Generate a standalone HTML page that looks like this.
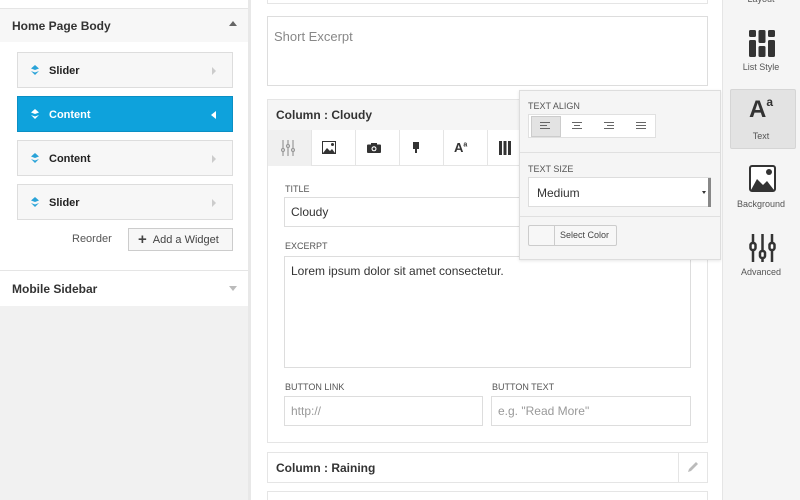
<!DOCTYPE html>
<html><head><style>
*{box-sizing:border-box;margin:0;padding:0}
html,body{width:800px;height:500px;overflow:hidden}
body{position:relative;background:#fff;font-family:"Liberation Sans",sans-serif;color:#333}
.a{position:absolute}
.lbl{font-size:9px;color:#555;text-transform:uppercase}
.inp{border:1px solid #ddd;background:#fff;font-size:12px;color:#333;padding:7px 6px}
.item{left:17px;width:216px;height:36px;border:1px solid #ddd;background:#f7f7f7;font-size:11px;font-weight:bold;padding:12px 0 0 31px;color:#222}
.item .ic{position:absolute;left:12px;top:12px;width:10px;height:10px}
.item .ar{position:absolute;right:16px;top:14px;width:0;height:0;border-left:4px solid #ccc;border-top:4px solid transparent;border-bottom:4px solid transparent}
.tb{top:130px;height:36px;width:44px;border-right:1px solid #e5e5e5}
.ri{left:722px;width:78px;text-align:center;font-size:9px;color:#555}
</style></head><body>
<div class="a" style="left:0;top:0;width:248px;height:500px;background:#f1f1f1"></div>
<div class="a" style="left:0;top:0;width:248px;height:306px;background:#fff"></div>
<div class="a" style="left:0;top:8px;width:248px;height:34px;background:#f7f7f7;border-top:1px solid #e5e5e5;font-size:12px;font-weight:bold;padding:10px 12px">Home Page Body</div>
<div class="a" style="left:229px;top:21px;border-bottom:5px solid #666;border-left:4px solid transparent;border-right:4px solid transparent"></div>
<div class="a item" style="top:52px"><svg class="ic" viewBox="0 0 10 10"><path d="M5 0L9 3.5L5 5L1 3.5Z M1 6L5 7.5L9 6L5 10Z" fill="#2aa3d8"/></svg>Slider<span class="ar"></span></div>
<div class="a item" style="top:96px;background:#0ea2dc;border-color:#0b8fc4;color:#fff"><svg class="ic" viewBox="0 0 10 10"><path d="M5 0L9 3.5L5 5L1 3.5Z M1 6L5 7.5L9 6L5 10Z" fill="#fff"/></svg>Content<span class="ar" style="border-left:none;border-right:5px solid #fff"></span></div>
<div class="a item" style="top:140px"><svg class="ic" viewBox="0 0 10 10"><path d="M5 0L9 3.5L5 5L1 3.5Z M1 6L5 7.5L9 6L5 10Z" fill="#2aa3d8"/></svg>Content<span class="ar"></span></div>
<div class="a item" style="top:184px"><svg class="ic" viewBox="0 0 10 10"><path d="M5 0L9 3.5L5 5L1 3.5Z M1 6L5 7.5L9 6L5 10Z" fill="#2aa3d8"/></svg>Slider<span class="ar"></span></div>
<div class="a" style="left:72px;top:233px;font-size:11px;color:#555">Reorder</div>
<div class="a" style="left:128px;top:228px;width:105px;height:23px;border:1px solid #ccc;background:#f7f7f7;font-size:11px;color:#444;display:flex;align-items:center;padding-left:9px"><b style="font-size:15px;margin-right:6px;line-height:1">+</b>Add a Widget</div>
<div class="a" style="left:0;top:270px;width:248px;height:36px;border-top:1px solid #e5e5e5;font-size:12px;font-weight:bold;padding:11px 12px">Mobile Sidebar</div>
<div class="a" style="left:229px;top:286px;border-top:5px solid #bbb;border-left:4px solid transparent;border-right:4px solid transparent"></div>
<div class="a" style="left:248px;top:0;width:3px;height:500px;background:#e8e8e8"></div>
<div class="a" style="left:267px;top:-2px;width:441px;height:6px;border:1px solid #e5e5e5"></div>
<div class="a inp" style="left:267px;top:16px;width:441px;height:70px;color:#888;font-size:13px;padding:12px 6px">Short Excerpt</div>
<div class="a" style="left:267px;top:99px;width:441px;height:344px;border:1px solid #e5e5e5"></div>
<div class="a" style="left:268px;top:100px;width:439px;height:30px;background:#f5f5f5;font-size:12px;font-weight:bold;padding:8px 8px;color:#333">Column : Cloudy</div>
<div class="a" style="left:268px;top:130px;width:439px;height:36px;border-bottom:1px solid #e5e5e5"></div>
<div class="a tb" style="left:268px;background:#f0f0f0"><svg style="margin:10px 0 0 13px" width="14" height="16" viewBox="0 0 14 16" fill="none" stroke="#999" stroke-width="1.2"><path d="M2 0V16M7 0V16M12 0V16"/><circle cx="2" cy="10" r="1.5" fill="#f0f0f0"/><circle cx="7" cy="6" r="1.5" fill="#f0f0f0"/><circle cx="12" cy="10" r="1.5" fill="#f0f0f0"/></svg></div>
<div class="a tb" style="left:312px"><svg style="margin:11px 0 0 10px" width="14" height="13" viewBox="0 0 14 13"><rect x="0.5" y="0.5" width="13" height="12" fill="#fff" stroke="#333"/><path d="M1 12L5 7L8 10L10 8L13 12Z" fill="#333"/><circle cx="10.5" cy="3.5" r="1.5" fill="#333"/></svg></div>
<div class="a tb" style="left:356px"><svg style="margin:13px 0 0 11px" width="14" height="10" viewBox="0 0 14 10"><rect x="0" y="1.5" width="14" height="8.5" rx="1" fill="#333"/><rect x="4" y="0" width="6" height="2" fill="#333"/><circle cx="7" cy="5.8" r="2.5" fill="#fff"/><circle cx="7" cy="5.8" r="1.4" fill="#333"/></svg></div>
<div class="a tb" style="left:400px"><svg style="margin:12px 0 0 13px" width="6" height="12" viewBox="0 0 6 12"><rect x="0" y="0" width="6" height="7" fill="#333"/><rect x="2" y="7" width="2" height="4" fill="#333"/></svg></div>
<div class="a tb" style="left:444px;font-weight:bold;font-size:13px;padding:10px 0 0 10px;color:#333">A<sup style="font-size:7px">a</sup></div>
<div class="a tb" style="left:488px;border-right:none"><svg style="margin:11px 0 0 11px" width="12" height="14" viewBox="0 0 12 14"><rect x="0" y="0" width="3" height="14" fill="#333"/><rect x="4.5" y="0" width="3" height="14" fill="#333"/><rect x="9" y="0" width="3" height="14" fill="#333"/></svg></div>
<div class="a lbl" style="left:285px;top:184px">Title</div>
<div class="a inp" style="left:284px;top:197px;width:406px;height:30px;font-size:12px">Cloudy</div>
<div class="a lbl" style="left:285px;top:241px">Excerpt</div>
<div class="a inp" style="left:284px;top:256px;width:407px;height:112px;font-size:12px">Lorem ipsum dolor sit amet consectetur.</div>
<div class="a lbl" style="left:285px;top:382px">Button link</div>
<div class="a inp" style="left:284px;top:396px;width:199px;height:30px;color:#999">http://</div>
<div class="a lbl" style="left:492px;top:382px">Button text</div>
<div class="a inp" style="left:491px;top:396px;width:200px;height:30px;color:#999">e.g. "Read More"</div>
<div class="a" style="left:267px;top:452px;width:441px;height:31px;border:1px solid #e5e5e5;font-size:12px;font-weight:bold;padding:8px 8px">Column : Raining</div>
<div class="a" style="left:678px;top:453px;width:1px;height:29px;background:#e5e5e5"></div>
<svg class="a" style="left:687px;top:461px" width="12" height="12" viewBox="0 0 12 12"><path d="M1 11L2 8L9 1L11 3L4 10Z" fill="#bbb"/></svg>
<div class="a" style="left:267px;top:491px;width:441px;height:9px;border:1px solid #e5e5e5;border-bottom:none"></div>
<div class="a" style="left:519px;top:90px;width:202px;height:170px;background:#f5f5f5;border:1px solid #ddd;box-shadow:0 1px 3px rgba(0,0,0,.1)"></div>
<div class="a lbl" style="left:528px;top:101px">Text align</div>
<div class="a" style="left:528px;top:114px;width:128px;height:24px;border:1px solid #e0e0e0;background:#fff"></div>
<div class="a" style="left:531px;top:116px;width:30px;height:21px;background:#e3e3e3;border:1px solid #ccc"></div>
<svg class="a" style="left:540px;top:122px" width="110" height="8" viewBox="0 0 110 8" stroke="#666" stroke-width="1"><path d="M0 .5H10M0 3.5H7M0 6.5H10M32 .5H42M34 3.5H40M32 6.5H42M64 .5H74M67 3.5H74M64 6.5H74M96 .5H106M96 3.5H106M96 6.5H106"/></svg>
<div class="a" style="left:520px;top:152px;width:200px;height:1px;background:#e0e0e0"></div>
<div class="a lbl" style="left:528px;top:164px">Text size</div>
<div class="a inp" style="left:528px;top:177px;width:183px;height:30px;font-size:12px;padding:8px 8px">Medium</div>
<div class="a" style="left:708px;top:178px;width:3px;height:29px;background:#888"></div>
<div class="a" style="left:702px;top:191px;border-top:3px solid #333;border-left:2px solid transparent;border-right:2px solid transparent"></div>
<div class="a" style="left:520px;top:216px;width:200px;height:1px;background:#e0e0e0"></div>
<div class="a" style="left:528px;top:225px;width:89px;height:21px;border:1px solid #ccc;background:#f7f7f7;border-radius:2px"></div>
<div class="a" style="left:554px;top:226px;width:1px;height:19px;background:#ccc"></div>
<div class="a" style="left:560px;top:230px;font-size:9px;color:#444">Select Color</div>
<div class="a" style="left:722px;top:0;width:78px;height:500px;background:#f5f5f5;border-left:1px solid #e5e5e5"></div>
<div class="a ri" style="top:-6px">Layout</div>
<svg class="a" style="left:749px;top:30px" width="26" height="27" viewBox="0 0 26 27" fill="#333"><rect x="0" y="0" width="7" height="7" rx="1.5"/><rect x="0" y="10" width="7" height="17" rx="1.5"/><rect x="9.5" y="0" width="7" height="13" rx="1.5"/><rect x="9.5" y="16" width="7" height="11" rx="1.5"/><rect x="19" y="0" width="7" height="7" rx="1.5"/><rect x="19" y="10" width="7" height="17" rx="1.5"/></svg>
<div class="a ri" style="top:62px">List Style</div>
<div class="a" style="left:730px;top:89px;width:66px;height:60px;background:#e3e3e3;border:1px solid #d5d5d5;border-radius:2px"></div>
<div class="a ri" style="top:96px;font-size:24px;font-weight:bold;color:#333">A<sup style="font-size:12px;position:relative;top:-2px">a</sup></div>
<div class="a ri" style="top:131px">Text</div>
<svg class="a" style="left:749px;top:165px" width="27" height="27" viewBox="0 0 27 27"><rect x="1" y="1" width="25" height="25" rx="2" fill="#fff" stroke="#333" stroke-width="2"/><path d="M2 25L8 14L14 20L18 16L25 25Z" fill="#333"/><circle cx="20" cy="7" r="3" fill="#333"/></svg>
<div class="a ri" style="top:199px">Background</div>
<svg class="a" style="left:749px;top:234px" width="27" height="28" viewBox="0 0 27 28" fill="none" stroke="#333" stroke-width="2.5"><path d="M4 0V28M13.5 0V28M23 0V28"/><rect x="1.5" y="9" width="5" height="7" rx="2" fill="#fff"/><rect x="11" y="17" width="5" height="7" rx="2" fill="#fff"/><rect x="20.5" y="9" width="5" height="7" rx="2" fill="#fff"/></svg>
<div class="a ri" style="top:267px">Advanced</div>
</body></html>
